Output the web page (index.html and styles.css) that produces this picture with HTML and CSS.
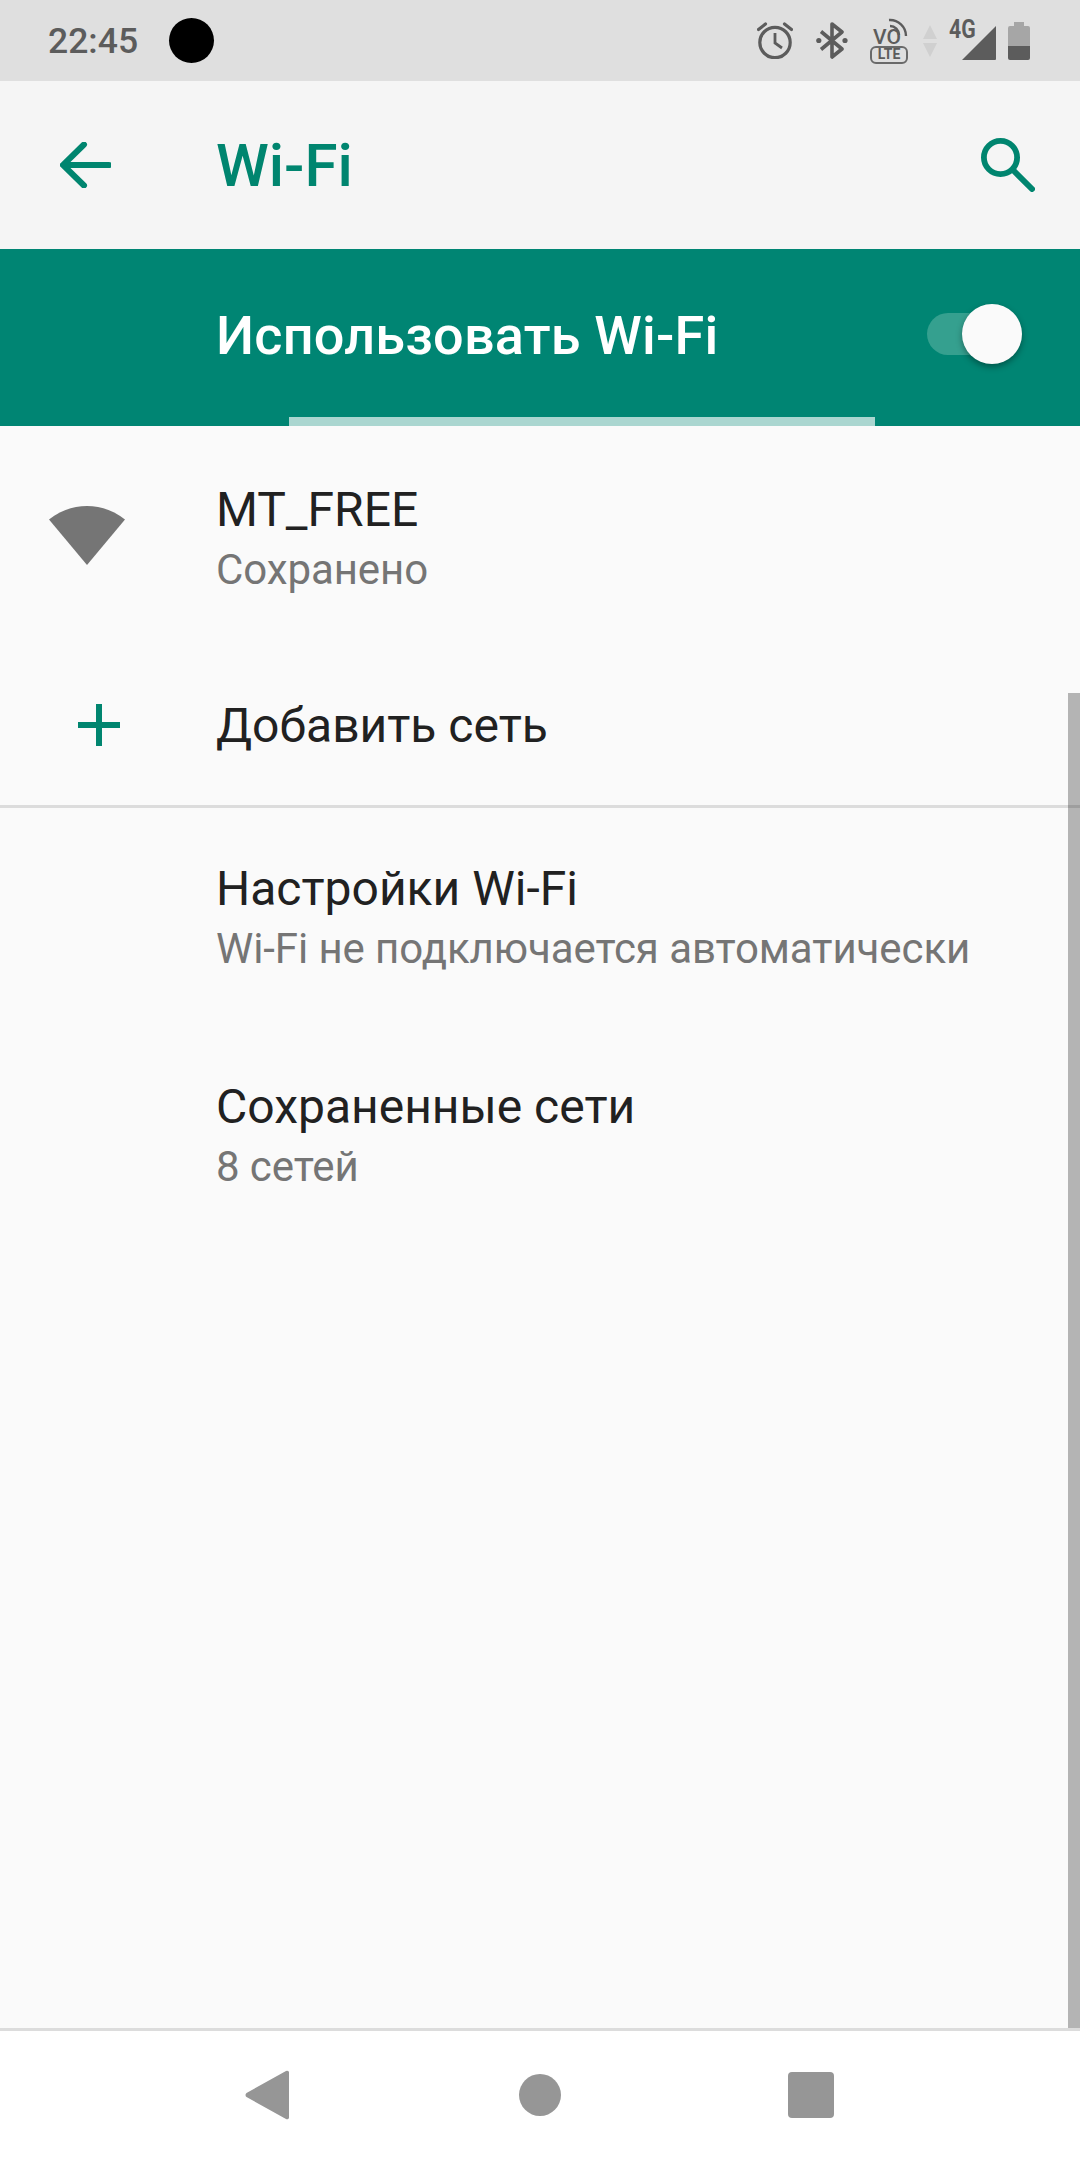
FILE: index.html
```html
<!DOCTYPE html>
<html lang="ru">
<head>
<meta charset="utf-8">
<title>Wi-Fi</title>
<link rel="stylesheet" href="styles.css">
</head>
<body>
<div class="screen">
  <header class="status">
    <span class="time">22:45</span>
    <span class="camera"></span>
    <div class="status-icons">
      <svg class="ic-alarm" viewBox="0 0 36 37" width="36" height="37"><circle cx="18" cy="20.500" r="15.200" fill="none" stroke="#5c5c5c" stroke-width="3.200"/><path d="M18 11v10l7 5" fill="none" stroke="#5c5c5c" stroke-width="2.800"/><path d="M1.500 7.500 8.500 2M34.500 7.500 27.500 2" fill="none" stroke="#5c5c5c" stroke-width="3.200" stroke-linecap="round"/></svg>
      <svg class="ic-bt" viewBox="0 0 32 37" width="32" height="37"><path d="M5 9.500 26 27 16 35V2L26 10 5 27.500" fill="none" stroke="#5c5c5c" stroke-width="3.600" stroke-linejoin="round"/><circle cx="2.800" cy="18.500" r="2.600" fill="#5c5c5c"/><circle cx="29" cy="18.500" r="2.600" fill="#5c5c5c"/></svg>
      <div class="volte">
        <svg class="vo-waves" viewBox="0 0 20 20" width="20" height="20"><path d="M2 8a9 9 0 0 1 9 9M1 2a16 16 0 0 1 17 16" fill="none" stroke="#5c5c5c" stroke-width="2.400"/></svg>
        <span class="vo">VO</span>
        <span class="lte">LTE</span>
      </div>
      <svg class="ic-arrows" viewBox="0 0 14 32" width="14" height="32"><path d="M7 0 14 14H0ZM7 32 0 18H14Z" fill="#d0d0d0"/></svg>
      <div class="signal">
        <span class="g4">4G</span>
        <svg viewBox="0 0 34 34" width="34" height="34"><path d="M34 0V33a1 1 0 0 1-1 1H0Z" fill="#5c5c5c"/></svg>
      </div>
      <svg class="ic-batt" viewBox="0 0 22 38" width="22" height="38"><path d="M6 0h10v4h4a2 2 0 0 1 2 2v18H0V6a2 2 0 0 1 2-2h4Z" fill="#a6a6a6"/><path d="M0 24h22v12a2 2 0 0 1-2 2H2a2 2 0 0 1-2-2Z" fill="#5c5c5c"/></svg>
    </div>
  </header>

  <div class="appbar">
    <svg class="ic-back" viewBox="0 0 51 46" width="51" height="46"><path d="M49 23H4M24 2.500 3 23l21 20.500" fill="none" stroke="#00856f" stroke-width="6" stroke-linecap="round" stroke-linejoin="miter"/></svg>
    <h1 class="app-title">Wi-Fi</h1>
    <svg class="ic-search" viewBox="0 0 54 54" width="54" height="54"><circle cx="19.500" cy="19.500" r="16.600" fill="none" stroke="#00856f" stroke-width="5.800"/><path d="M33 33 51 51" stroke="#00856f" stroke-width="6" stroke-linecap="round"/></svg>
  </div>

  <div class="master">
    <span class="master-label">Использовать Wi-Fi</span>
    <div class="switch"><span class="thumb"></span></div>
    <span class="indicator"></span>
  </div>

  <main class="content">
    <div class="row row-net">
      <svg class="ic-wifi" viewBox="0 0 76 59" width="76" height="59"><path d="M0 13.500C22 -4.500 54 -4.500 76 13.500L38 59Z" fill="#757575"/></svg>
      <div class="row-text">
        <div class="row-title">MT_FREE</div>
        <div class="row-sub">Сохранено</div>
      </div>
    </div>
    <div class="row row-add">
      <svg class="ic-plus" viewBox="0 0 42 42" width="42" height="42"><path d="M18 0h6v18h18v6H24v18h-6V24H0v-6h18Z" fill="#00856f"/></svg>
      <div class="row-title">Добавить сеть</div>
    </div>
    <div class="row row-plain">
      <div class="row-text">
        <div class="row-title">Настройки Wi-Fi</div>
        <div class="row-sub">Wi-Fi не подключается автоматически</div>
      </div>
    </div>
    <div class="row row-plain">
      <div class="row-text">
        <div class="row-title">Сохраненные сети</div>
        <div class="row-sub">8 сетей</div>
      </div>
    </div>
    <span class="scrollbar"></span>
  </main>

  <nav class="navbar">
    <div class="nav-btn"><svg class="nav-tri" viewBox="0 0 44 50" width="44" height="50"><path d="M41 1 1.500 23a2.500 2.500 0 0 0 0 4L41 49a2 2 0 0 0 3-2V3a2 2 0 0 0-3-2Z" fill="#969696"/></svg></div>
    <div class="nav-btn"><span class="nav-circle"></span></div>
    <div class="nav-btn"><span class="nav-square"></span></div>
  </nav>
</div>
</body>
</html>
```
FILE: styles.css
```css
* { box-sizing: border-box; }
html, body { margin: 0; padding: 0; }
body { font-family: Roboto, "Noto Sans", sans-serif; background: #fafafa; }
svg { display: block; flex: none; }

.screen { width: 1080px; height: 2160px; display: flex; flex-direction: column; }

.status { height: 81px; flex: none; background: #dfdfdf; display: flex; align-items: center; padding: 0 50px 0 48px; }
.time { font-size: 35.500px; font-weight: 500; color: #5c5c5c; width: 121px; }
.camera { width: 45px; height: 45px; border-radius: 50%; background: #000; }
.status-icons { margin-left: auto; display: flex; align-items: center; }
.ic-bt { margin-left: 23px; }
.volte { position: relative; width: 38px; height: 46px; margin-left: 22px; }
.vo { position: absolute; left: 3px; top: 8px; font-size: 21px; line-height: 22px; font-weight: 500; color: #5c5c5c; }
.vo-waves { position: absolute; right: 0; top: 0; }
.lte { position: absolute; left: 0; right: 0; bottom: 0; height: 18px; border: 2.500px solid #6a6a6a; border-radius: 6px; font-size: 14px; line-height: 13px; font-weight: 700; color: #5c5c5c; text-align: center; }
.ic-arrows { margin-left: 15px; }
.signal { position: relative; width: 47px; height: 39px; margin-left: 12px; display: flex; justify-content: flex-end; align-items: flex-end; }
.g4 { position: absolute; left: 0; top: -2px; font-size: 25px; line-height: 22px; font-weight: 700; color: #5c5c5c; transform: scaleX(.85); transform-origin: left; }
.ic-batt { margin-left: 12px; }

.appbar { height: 168px; flex: none; background: #f5f5f5; display: flex; align-items: center; padding: 0 45px 0 60px; }
.app-title { margin: 0 0 0 105px; font-size: 60px; font-weight: 500; color: #00856f; flex: 1; }

.master { position: relative; height: 177px; flex: none; background: #008573; display: flex; align-items: center; padding: 0 58px 0 216px; }
.master-label { font-size: 54px; font-weight: 500; letter-spacing: .2px; color: #fff; flex: 1; position: relative; top: -2px; }
.switch { position: relative; width: 95px; height: 42px; border-radius: 21px; background: #35a08f; top: -4px; }
.thumb { position: absolute; right: 0; top: -9px; width: 60px; height: 60px; border-radius: 50%; background: #fafafa; box-shadow: 0 3px 6px rgba(0,0,0,.35); }
.indicator { position: absolute; left: 289px; bottom: 0; width: 586px; height: 9px; background: #aad6d0; }

.content { position: relative; flex: 1; display: flex; flex-direction: column; border-bottom: 3px solid #dcdcdc; background: #fafafa; }
.row { display: flex; align-items: center; height: 218px; padding: 0 70px 0 49px; flex: none; }
.row-text { margin-left: 91px; }
.row-net .row-text { padding-top: 9px; }
.row-plain .row-text { margin-left: 167px; padding-top: 3px; }
.row-title { font-size: 48px; line-height: 60px; color: #212121; }
.row-sub { font-size: 42px; line-height: 60px; letter-spacing: -.08px; color: #757575; }
.row-add { height: 161px; padding-left: 78px; border-bottom: 3px solid #dcdcdc; box-sizing: content-box; }
.row-add .row-title { margin-left: 96px; padding-top: 3px; }
.scrollbar { position: absolute; right: 0; top: 267px; bottom: 0; width: 12px; background: rgba(0,0,0,.28); }

.navbar { height: 129px; flex: none; background: #fff; display: flex; justify-content: center; align-items: center; padding-bottom: 2px; }
.nav-btn { width: 271px; display: flex; justify-content: center; align-items: center; }
.nav-tri { margin-right: 4px; }
.nav-circle { width: 42px; height: 42px; border-radius: 50%; background: #969696; }
.nav-square { width: 46px; height: 46px; border-radius: 4px; background: #969696; }
```
